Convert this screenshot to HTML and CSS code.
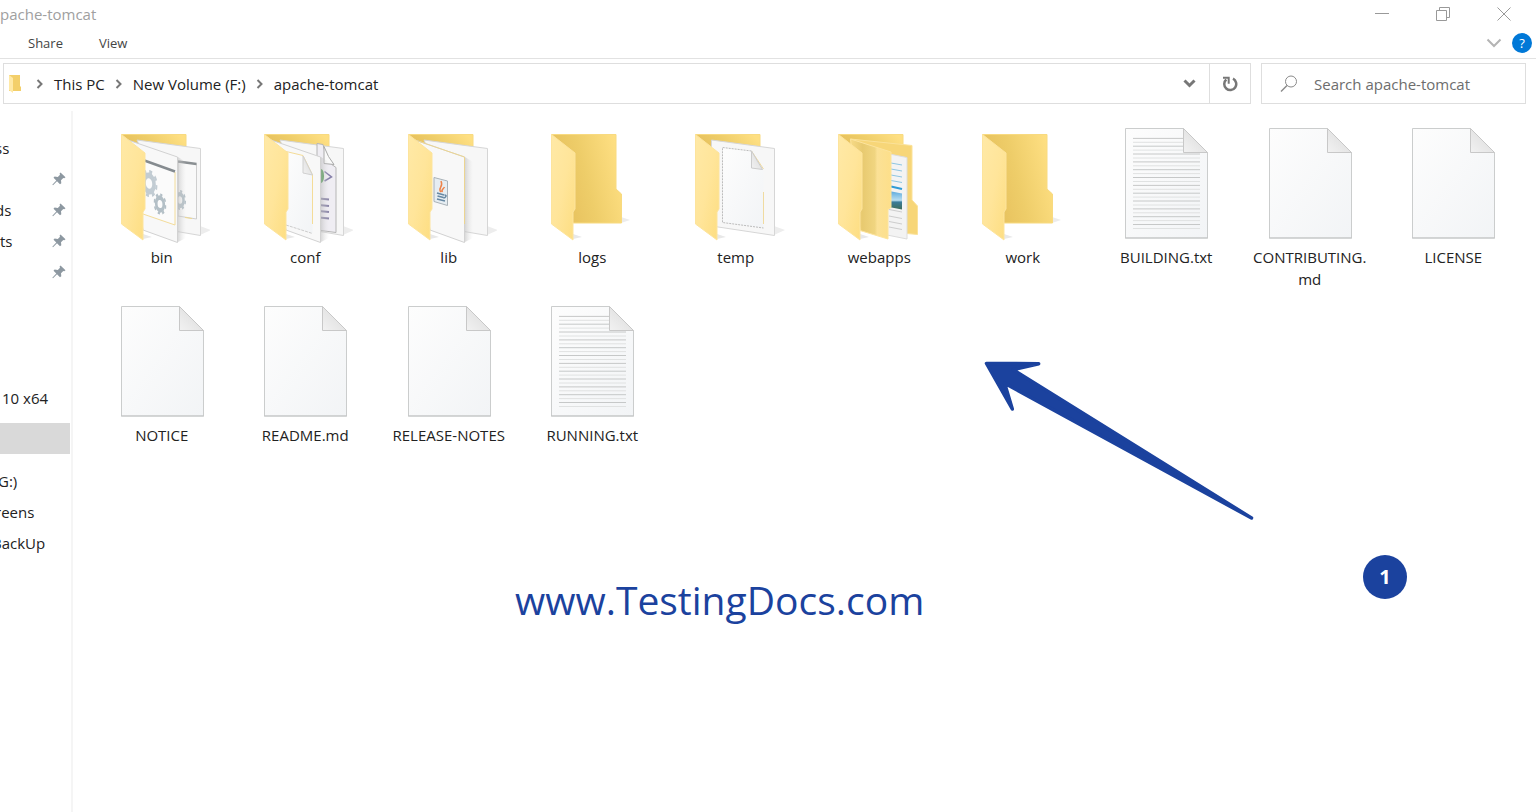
FILE: index.html
```html
<!DOCTYPE html>
<html lang="en">
<head>
  <meta charset="UTF-8">
  <meta name="viewport" content="width=device-width, initial-scale=1.0">
  <title>apache-tomcat</title>
  <link rel="stylesheet" href="styles.css">
</head>
<body>
  <!-- shared icon shapes -->
  <svg class="defs" width="0" height="0" aria-hidden="true">
    <defs>
      <linearGradient id="flapFill" x1="0" y1="0" x2="1" y2="1">
        <stop offset="0" stop-color="#ffe9a6"/>
        <stop offset="0.5" stop-color="#ffe59a"/>
        <stop offset="1" stop-color="#fddd80"/>
      </linearGradient>
      <linearGradient id="backFill" x1="0" y1="0.3" x2="1" y2="0">
        <stop offset="0" stop-color="#e6c05c"/>
        <stop offset="0.4" stop-color="#eecd69"/>
        <stop offset="0.9" stop-color="#fedf82"/>
      </linearGradient>
      <linearGradient id="pageFill" x1="0" y1="0" x2="1" y2="1">
        <stop offset="0" stop-color="#fdfdfd"/>
        <stop offset="1" stop-color="#f2f4f6"/>
      </linearGradient>
      <linearGradient id="foldFill" x1="0" y1="1" x2="1" y2="0">
        <stop offset="0" stop-color="#f2f2f2"/>
        <stop offset="1" stop-color="#d8d8d8"/>
      </linearGradient>
      <linearGradient id="shadeFill" x1="0" y1="0" x2="1" y2="0">
        <stop offset="0" stop-color="#bbb" stop-opacity="0.55"/>
        <stop offset="1" stop-color="#ddd" stop-opacity="0"/>
      </linearGradient>
      <linearGradient id="innerFlap" x1="0" y1="0" x2="1" y2="0">
        <stop offset="0" stop-color="#f6da86"/>
        <stop offset="0.3" stop-color="#e8ca70"/>
        <stop offset="0.6" stop-color="#f0d580"/>
        <stop offset="0.66" stop-color="#fbe196"/>
        <stop offset="1" stop-color="#fddf8a"/>
      </linearGradient>
      <linearGradient id="skyFill" x1="0" y1="0" x2="0" y2="1">
        <stop offset="0" stop-color="#5aa9dd"/>
        <stop offset="0.5" stop-color="#b9def0"/>
        <stop offset="0.6" stop-color="#3a7c9a"/>
        <stop offset="1" stop-color="#3f6e5a"/>
      </linearGradient>
    </defs>
    <symbol id="flap" viewBox="0 0 96 118">
      <path d="M29 113l9-2-9-3z" fill="#e8e8e8"/>
      <path d="M7.500 8.500L31 27v56l-2 3v28L7.500 98z" fill="url(#flapFill)" stroke="#fde49d"/>
    </symbol>
    <symbol id="back" viewBox="0 0 96 118">
      <path d="M77 97l9-3-9-3z" fill="#ececec"/>
      <path d="M7.500 8.500H72V63l5.500 5v29H20V20z" fill="url(#backFill)" stroke="#f8da80"/>
    </symbol>
    <symbol id="backTop" viewBox="0 0 96 118">
      <path d="M7.500 8.500H72V30H20z" fill="url(#backFill)" stroke="#f8da80"/>
    </symbol>
    <symbol id="rearPage" viewBox="0 0 96 118">
      <path d="M86 109l11-5-11-4z" fill="#ededed"/>
      <path d="M23 14l63.500 8.500v87L60 105z" fill="#f7f7f7" stroke="#d6d6d6"/>
    </symbol>
    <symbol id="frontPage" viewBox="0 0 96 118">
      <path d="M64 31l8 5v76l-8 4z" fill="url(#shadeFill)"/>
      <path d="M14 14l49.500 17v85.500L29 104z" fill="#f8f8f8" stroke="#d2d2d2"/>
    </symbol>
    <symbol id="gear" viewBox="-12 -12 24 24">
      <circle r="7" fill="none" stroke="currentColor" stroke-width="5"/>
      <circle r="10.500" fill="none" stroke="currentColor" stroke-width="3" stroke-dasharray="4 4.250"/>
    </symbol>
    <symbol id="blankFile" viewBox="0 0 96 118">
      <path d="M7.500 2.500h58L89.500 26.500v85.500h-82z" fill="url(#pageFill)" stroke="#cbcdcd"/>
      <path d="M65.500 2.500v24h24z" fill="url(#foldFill)" stroke="#c8c8c8" stroke-linejoin="round"/>
      <path d="M7 112h83" stroke="#c3c5c5"/>
    </symbol>
    <symbol id="textFile" viewBox="0 0 96 118">
      <path d="M7.500 2.500h58L89.500 26.500v85.500h-82z" fill="url(#pageFill)" stroke="#cbcdcd"/>
      <path d="M15 12.400h51M15 20.200h51M15 28h67M15 35.900h67M15 43.700h67M15 51.500h67M15 59.400h67M15 67.200h67M15 75h67M15 82.900h67M15 90.700h67M15 98.500h67" stroke="#c6c8c8"/>
      <path d="M15 16.300h51M15 24.100h51M15 32h67M15 39.800h67M15 47.600h67M15 55.500h67M15 63.300h67M15 71.100h67M15 79h67M15 86.800h67M15 94.600h67M15 102.500h67" stroke="#e0e2e2"/>
      <path d="M65.500 2.500v24h24z" fill="url(#foldFill)" stroke="#c8c8c8" stroke-linejoin="round"/>
      <path d="M7 112h83" stroke="#c3c5c5"/>
    </symbol>
    <symbol id="pin" viewBox="0 0 14 14">
      <path d="M8.500 0.500L13.500 5.200L12.300 6.300L11.300 6L9 8.300L9.300 11.200L8 12.300L5 9.300L1 13.300L0.300 12.800L4.300 8.500L1.500 5.700L2.600 4.600L5.800 4.900L8 2.700L7.600 1.500z" fill="#8d98a1"/>
    </symbol>
    <symbol id="chevron" viewBox="0 0 8 10">
      <path d="M1.500 1l4 4-4 4" fill="none" stroke="#777" stroke-width="2"/>
    </symbol>
  </svg>

  <header>
    <div class="titlebar">
      <h1>pache-tomcat</h1>
      <div class="window-buttons">
        <button type="button" aria-label="Minimize">
          <svg width="14" height="14" viewBox="0 0 14 14"><path d="M0 6.500h14" stroke="#999"/></svg>
        </button>
        <button type="button" aria-label="Restore">
          <svg width="14" height="14" viewBox="0 0 14 14"><path d="M0.500 3.500h10v10h-10zM3.500 3.500v-3h10v10h-3" fill="none" stroke="#999"/></svg>
        </button>
        <button type="button" aria-label="Close">
          <svg width="14" height="14" viewBox="0 0 14 14"><path d="M0.500 0.500l13 13M13.500 0.500l-13 13" stroke="#999"/></svg>
        </button>
      </div>
    </div>

    <div class="ribbon">
      <button type="button">Share</button>
      <button type="button">View</button>
      <div class="ribbon-end">
        <button type="button" aria-label="Expand ribbon">
          <svg width="16" height="10" viewBox="0 0 16 10"><path d="M1.500 1.500L8 8l6.500-6.500" fill="none" stroke="#b4b4b4" stroke-width="2"/></svg>
        </button>
        <button type="button" class="help">?</button>
      </div>
    </div>

    <div class="location">
      <nav class="address">
        <svg class="folder-small" width="14" height="20" viewBox="0 0 14 20">
          <path d="M1 1h11v11l1 1v4H1z" fill="#f3cf6a"/>
          <path d="M1 1l4 3v15l-4-3z" fill="#ffe9a6"/>
        </svg>
        <svg width="8" height="10"><use href="#chevron"/></svg>
        <button type="button">This PC</button>
        <svg width="8" height="10"><use href="#chevron"/></svg>
        <button type="button">New Volume (F:)</button>
        <svg width="8" height="10"><use href="#chevron"/></svg>
        <button type="button">apache-tomcat</button>
        <button type="button" class="history" aria-label="Previous locations">
          <svg width="13" height="9" viewBox="0 0 13 9"><path d="M1.500 1.500l5 5 5-5" fill="none" stroke="#777" stroke-width="3"/></svg>
        </button>
        <button type="button" class="refresh" aria-label="Refresh">
          <svg width="16" height="16" viewBox="0 0 16 16">
            <path d="M11 2.700A6 6 0 1 1 4.300 3.500" fill="none" stroke="#777" stroke-width="2.500"/>
            <path d="M1 1.700h5.700v6" fill="none" stroke="#777" stroke-width="2"/>
          </svg>
        </button>
      </nav>
      <form class="search">
        <svg width="18" height="18" viewBox="0 0 18 18"><circle cx="11" cy="6.500" r="5.500" fill="none" stroke="#8a8a8a"/><path d="M7 10.500l-6 6" stroke="#8a8a8a" stroke-width="1.500"/></svg>
        <input type="search" aria-label="Search apache-tomcat" placeholder="Search apache-tomcat">
      </form>
    </div>
  </header>

  <div class="window-body">
    <aside>
      <ul class="quick">
        <li><a href="#" class="cut">ss</a></li>
        <li><a href="#"><svg width="14" height="14"><use href="#pin"/></svg></a></li>
        <li><a href="#" class="cut">ds<svg width="14" height="14"><use href="#pin"/></svg></a></li>
        <li><a href="#">ts<svg width="14" height="14"><use href="#pin"/></svg></a></li>
        <li><a href="#"><svg width="14" height="14"><use href="#pin"/></svg></a></li>
      </ul>
      <ul class="drives">
        <li><a href="#" class="indent">10 x64</a></li>
        <li class="selected"><a href="#" aria-label="New Volume (F:)"></a></li>
        <li><a href="#" class="trim">G:)</a></li>
        <li><a href="#" class="cut">reens</a></li>
        <li><a href="#" class="cut-more">BackUp</a></li>
      </ul>
    </aside>

    <main>
      <div class="files">
        <a href="#" class="file">
          <svg class="icon" viewBox="0 0 96 118">
            <use href="#backTop"/>
            <use href="#rearPage"/>
            <path d="M64 35.500l18.500 2.500v55l-18.500-3z" fill="#f9f9f9" stroke="#cfcfcf"/>
            <path d="M64 35.500l18.500 2.500" stroke="#8a8f92" stroke-width="2.500"/>
            <path d="M71 91.500l7 1" stroke="#f1d98d"/>
            <g transform="translate(66 74) skewY(8) scale(0.500 0.850)"><use href="#gear" x="-12" y="-12" width="24" height="24" color="#b3bfc6"/></g>
            <use href="#frontPage"/>
            <path d="M29 34.500l32 11.500v53L29 88z" fill="#fbfbfb"/>
            <path d="M61 46v53L29 88" fill="none" stroke="#f3dc9a"/>
            <path d="M29 34l32 11.500" stroke="#858b8f" stroke-width="2.500"/>
            <g transform="translate(35 57.500) skewY(12) scale(0.720 1.150)"><use href="#gear" x="-12" y="-12" width="24" height="24" color="#c2ccd3"/></g>
            <g transform="translate(46 78) skewY(12) scale(0.540 0.900)"><use href="#gear" x="-12" y="-12" width="24" height="24" color="#b3bfc6"/></g>
            <use href="#flap"/>
          </svg>
          <span>bin</span>
        </a>
        <a href="#" class="file">
          <svg class="icon" viewBox="0 0 96 118">
            <use href="#backTop"/>
            <use href="#rearPage"/>
            <path d="M60 17.500l6 1q4 19 13 23v65L60 104z" fill="#efedf3" stroke="#b5b5b5"/>
            <path d="M67 20.500v17l10 1q-6-7-10-18z" fill="#fafafa" stroke="#aaa" stroke-linejoin="round"/>
            <ellipse cx="64" cy="50" rx="3" ry="7" fill="#4d9a50"/>
            <path d="M67.500 45.500l7 5.500-7 4" fill="none" stroke="#857fa8" stroke-width="1.500"/>
            <path d="M62 72.500l10 1M62 79l10 1M62 85l10 1M62 91.500l10 1" stroke="#8883a6" stroke-width="2"/>
            <use href="#frontPage"/>
            <path d="M27 25l19 5 9.500 19v58L29 99z" fill="url(#pageFill)"/>
            <path d="M29 99l26.500 8.500" stroke="#ccc" stroke-dasharray="3 1"/>
            <path d="M27 25l19 4.500 9.500 19.500v49" fill="none" stroke="#f4dc98"/>
            <path d="M46 30v17l9.500 2z" fill="url(#foldFill)" stroke="#d0d0d0" stroke-linejoin="round"/>
            <use href="#flap"/>
          </svg>
          <span>conf</span>
        </a>
        <a href="#" class="file">
          <svg class="icon" viewBox="0 0 96 118">
            <use href="#backTop"/>
            <use href="#rearPage"/>
            <use href="#frontPage"/>
            <path d="M14 14l49.500 17v67" fill="none" stroke="#ecd591"/>
            <path d="M33 51.500l13.500 3.500v24.500L33 75.500z" fill="#e6edf2" stroke="#a9b2b8"/>
            <path d="M40 66c-4-4 3-5 0-11M41.500 66c-2-2 1-3 2-5" fill="none" stroke="#ee8248" stroke-width="1.500"/>
            <path d="M36 67l7 2M36.500 70l6 1.500M36 73l8 2M43.500 69c3 0 1 3-1 3" fill="none" stroke="#6688a3" stroke-width="1.500"/>
            <use href="#flap"/>
          </svg>
          <span>lib</span>
        </a>
        <a href="#" class="file">
          <svg class="icon" viewBox="0 0 96 118">
            <use href="#back"/>
            <use href="#flap"/>
          </svg>
          <span>logs</span>
        </a>
        <a href="#" class="file">
          <svg class="icon" viewBox="0 0 96 118">
            <use href="#backTop"/>
            <path d="M86 109l11-5-11-4z" fill="#ededed"/>
            <path d="M23.500 14l63 8.500v87L23.500 100z" fill="#f7f7f7" stroke="#d6d6d6"/>
            <path d="M34.500 21.500l29 3.500 12 18v59l-41-5.500z" fill="url(#pageFill)"/>
            <path d="M63.500 25l-29-3.500v75l41 5.500" fill="none" stroke="#bcbcbc" stroke-dasharray="2 1"/>
            <path d="M63.500 25l12 18M75.500 66v32" stroke="#f0dba0"/>
            <path d="M63.500 25v17l11 1.500z" fill="url(#foldFill)" stroke="#ccc" stroke-linejoin="round"/>
            <use href="#flap"/>
          </svg>
          <span>temp</span>
        </a>
        <a href="#" class="file">
          <svg class="icon" viewBox="0 0 96 118">
            <use href="#backTop"/>
            <path d="M19.500 13L81 19.500V74l5.500 6v28.500L60 106z" fill="#f7d678" stroke="#fbe29a"/>
            <path d="M56 27.500l20 4V113l-20-4z" fill="#f3f3f3" stroke="#dcdcdc"/>
            <path d="M60 37l11 2M60 43l11 2M60 49l11 2M60 54.500l11 2" stroke="#8ec6e2"/>
            <path d="M60 60.500l11 2.500" stroke="#2f9bd6" stroke-width="2"/>
            <path d="M58 65l13 2.500v16L58 81z" fill="url(#skyFill)"/>
            <path d="M58 83.500l13 2.500M58 90l13 2.500M58 95.500l13 2.500M58 101l13 2.500" stroke="#cdcdcd"/>
            <path d="M19.500 13L60 26v55.500l-3 2V113l-28-8.500z" fill="url(#innerFlap)" stroke="#fde49d"/>
            <use href="#flap"/>
          </svg>
          <span>webapps</span>
        </a>
        <a href="#" class="file">
          <svg class="icon" viewBox="0 0 96 118">
            <use href="#back"/>
            <use href="#flap"/>
          </svg>
          <span>work</span>
        </a>
        <a href="#" class="file">
          <svg class="icon"><use href="#textFile"/></svg>
          <span>BUILDING.txt</span>
        </a>
        <a href="#" class="file">
          <svg class="icon"><use href="#blankFile"/></svg>
          <span>CONTRIBUTING.<wbr>md</span>
        </a>
        <a href="#" class="file">
          <svg class="icon"><use href="#blankFile"/></svg>
          <span>LICENSE</span>
        </a>
        <a href="#" class="file">
          <svg class="icon"><use href="#blankFile"/></svg>
          <span>NOTICE</span>
        </a>
        <a href="#" class="file">
          <svg class="icon"><use href="#blankFile"/></svg>
          <span>README.md</span>
        </a>
        <a href="#" class="file">
          <svg class="icon"><use href="#blankFile"/></svg>
          <span>RELEASE-NOTES</span>
        </a>
        <a href="#" class="file">
          <svg class="icon"><use href="#textFile"/></svg>
          <span>RUNNING.txt</span>
        </a>
      </div>

      <!-- annotations drawn over the file list -->
      <svg class="arrow" width="270" height="161" viewBox="0 0 270 161" aria-hidden="true">
        <path d="M2.500 3.500L54.700 3.700L29 9.600L267.500 158L20.600 23.300L28.300 49z" fill="#1b429e" stroke="#1b429e" stroke-width="3.500" stroke-linejoin="round"/>
      </svg>
      <p class="watermark">www.TestingDocs.com</p>
      <span class="step">1</span>
    </main>
  </div>
</body>
</html>
```
FILE: styles.css
```css
* {
  box-sizing: border-box;
}
body {
  font-family: "Open Sans", "Noto Sans", sans-serif;
  font-size: 15px;
  line-height: 22px;
  color: #222;
  margin: 0;
  min-height: 100vh;
  display: flex;
  flex-direction: column;
  background-color: #fff;
  overflow-x: hidden;
}
.defs {
  position: absolute;
}
button {
  font: inherit;
  color: inherit;
  background: none;
  border: none;
  padding: 0;
  cursor: pointer;
}
svg {
  display: block;
  flex: none;
}
a {
  color: inherit;
  text-decoration: none;
}
ul {
  list-style: none;
  margin: 0;
  padding: 0;
}

/* title bar and ribbon */
.titlebar {
  display: flex;
  justify-content: space-between;
  height: 28px;
  padding: 0 2px 0 0;
}
h1 {
  font-size: 15px;
  font-weight: 400;
  line-height: 28px;
  color: #a0a0a0;
  margin: 0;
}
.window-buttons {
  display: flex;
}
.window-buttons button {
  width: 61px;
  display: flex;
  align-items: center;
  justify-content: center;
}
.ribbon {
  display: flex;
  align-items: center;
  gap: 36px;
  height: 31px;
  padding: 0 4px 0 28px;
  border-bottom: 1px solid #e2e2e2;
  font-size: 13px;
  color: #444;
}
.ribbon-end {
  display: flex;
  align-items: center;
  gap: 10px;
  margin-left: auto;
}
.help {
  width: 20px;
  height: 20px;
  border-radius: 50%;
  background-color: #0078d7;
  color: #fff;
  font-size: 13px;
  line-height: 20px;
}

/* address bar */
.location {
  display: flex;
  gap: 10px;
  padding: 4px 10px 7px 3px;
}
.address {
  flex: 1;
  display: flex;
  align-items: center;
  height: 41px;
  border: 1px solid #dedede;
  gap: 10px;
  padding-left: 4px;
}
.folder-small {
  margin-right: 4px;
}
.history {
  margin-left: auto;
  padding: 0 3px;
}
.refresh {
  width: 41px;
  height: 100%;
  border-left: 1px solid #dedede;
  display: flex;
  align-items: center;
  justify-content: center;
}
.search {
  width: 265px;
  display: flex;
  align-items: center;
  gap: 16px;
  border: 1px solid #dedede;
  padding: 0 18px;
}
.search input {
  flex: 1;
  min-width: 0;
  font: inherit;
  border: none;
  outline: none;
  padding: 0;
  background: none;
}
.search input::placeholder {
  color: #6d6d6d;
}

/* side list */
.window-body {
  flex: 1;
  display: flex;
}
aside {
  width: 73px;
  flex: none;
  border-right: 2px solid #f5f5f5;
  padding: 21px 1px 0 0;
  overflow: hidden;
}
aside a {
  display: flex;
  align-items: center;
  height: 31px;
}
aside a svg {
  margin-left: auto;
  margin-right: 4px;
}
.quick {
  margin-bottom: 95px;
}
.selected {
  background-color: #d9d9d9;
  margin: 10px 0 11px;
}
.indent {
  padding-left: 2px;
}
.trim {
  margin-left: -2px;
}
.cut {
  margin-left: -5px;
}
.cut-more {
  margin-left: -8px;
}

/* file list */
main {
  position: relative;
  flex: 1;
  padding: 15px 11px 0 17px;
}
.files {
  display: grid;
  grid-template-columns: repeat(auto-fill, minmax(140px, 1fr));
  row-gap: 14px;
}
.file {
  display: flex;
  flex-direction: column;
  align-items: center;
  gap: 2px;
  text-align: center;
}
.file span {
  max-width: 124px;
}
.icon {
  width: 96px;
  height: 118px;
  overflow: visible;
}

/* annotations */
.arrow {
  position: absolute;
  left: 911px;
  top: 249px;
}
.watermark {
  position: absolute;
  left: 442px;
  top: 461px;
  margin: 0;
  font-size: 39px;
  line-height: 56px;
  color: #1b429e;
}
.step {
  position: absolute;
  left: 1290px;
  top: 444px;
  width: 44px;
  height: 44px;
  border-radius: 50%;
  background-color: #1b429e;
  color: #fff;
  font-size: 20px;
  font-weight: 700;
  line-height: 44px;
  text-align: center;
}
```
